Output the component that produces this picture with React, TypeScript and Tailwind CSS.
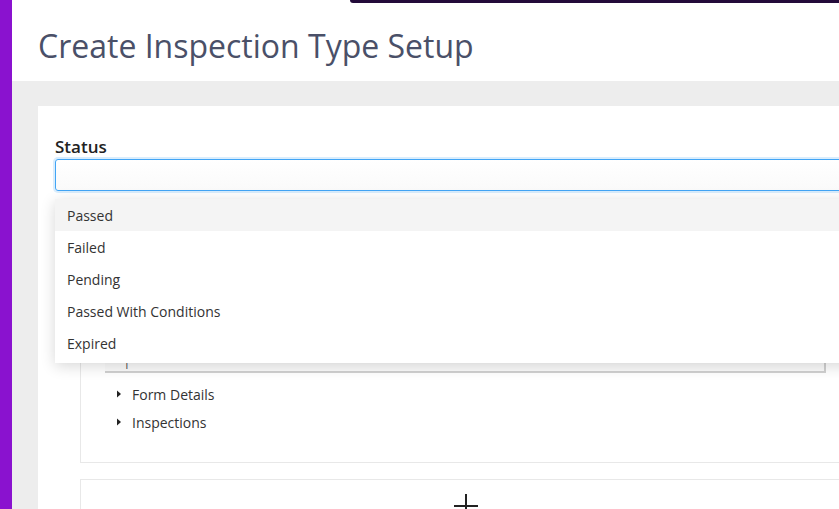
import React from "react";

const options = ["Passed", "Failed", "Pending", "Passed With Conditions", "Expired"];

function Caret() {
  return (
    <svg width="6" height="8" viewBox="0 0 6 8" className="shrink-0">
      <path d="M1 0.5 L5 4 L1 7.5 Z" fill="#222" />
    </svg>
  );
}

export default function App() {
  return (
    <div
      className="flex h-[509px] w-[839px] overflow-hidden bg-white"
      style={{ fontFamily: '"Open Sans", "Noto Sans", sans-serif' }}
    >
      {/* left rail */}
      <div className="w-[12px] shrink-0 bg-[#8a12cf]" />

      <div className="flex min-w-0 flex-1 flex-col">
        {/* header */}
        <div className="relative h-[81px] shrink-0 bg-white pl-[26px] pt-[23px]">
          <div className="absolute right-0 top-0 h-[3px] w-[489px] rounded-bl-[40px] bg-[#230a3a]" />
          <h1 className="text-[32px] font-medium leading-[46px] text-[#4a5068]">Create Inspection Type Setup</h1>
        </div>

        {/* body */}
        <div className="flex-1 bg-[#ededed] pl-[26px] pt-[25px]">
          <div className="h-full w-[900px] bg-white pl-[17px] pt-[29px]">
            <label className="block text-[17px] font-semibold leading-[24px] text-[#222]">Status</label>
            <div className="h-[32px] w-[900px] rounded-[3px] border border-[#42a5f5] bg-gradient-to-b from-white to-[#fafafa] shadow-[0_0_0_2px_rgba(66,165,245,0.2)]" />

            <div className="relative flex flex-col">
              {/* dropdown */}
              <div className="absolute left-0 top-[8px] z-10 w-[900px] bg-white pb-[4px] shadow-[0_3px_14px_rgba(0,0,0,0.16)]">
                {options.map((o, i) => (
                  <div
                    key={o}
                    className={`flex h-[32px] items-center pl-[12px] text-[14px] text-[#333] ${i === 0 ? "bg-[#f4f4f4]" : ""}`}
                  >
                    {o}
                  </div>
                ))}
              </div>

              {/* content behind the dropdown */}
              <div className="ml-[25px] mt-[21px] h-[251px] border border-[#e8e8e8] pl-[24px] pt-[14px]">
                <div className="h-[146px] w-[721px] border-b-2 border-r-2 border-[#d0d0d0] bg-[#fbfbfb] pl-[18px] pt-[122px] text-[14px] text-[#555]">
                  |
                </div>
                <div className="mt-[12px] flex flex-col gap-[10px] pl-[11px]">
                  <div className="flex h-[18px] items-center gap-[10px] text-[14px] text-[#333]">
                    <Caret />
                    Form Details
                  </div>
                  <div className="flex h-[18px] items-center gap-[10px] text-[14px] text-[#333]">
                    <Caret />
                    Inspections
                  </div>
                </div>
              </div>

              <div className="ml-[25px] mt-[16px] flex h-[60px] justify-center border border-[#e8e8e8] pr-[86px] pt-[14px]">
                <svg width="24" height="24" viewBox="0 0 24 24">
                  <path d="M12 0 V24 M0 12 H24" stroke="#222" strokeWidth="2" />
                </svg>
              </div>
            </div>
          </div>
        </div>
      </div>
    </div>
  );
}
